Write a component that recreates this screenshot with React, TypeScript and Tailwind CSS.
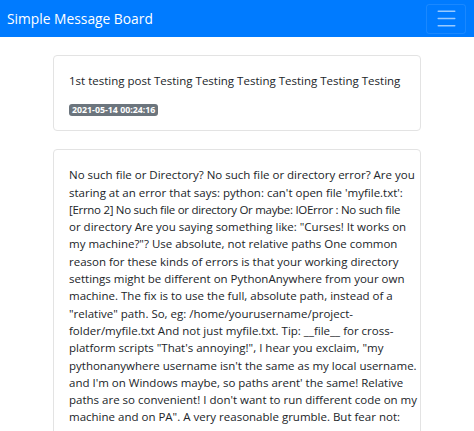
import { Menu } from 'lucide-react';

const firstPost = '1st testing post Testing Testing Testing Testing Testing Testing';

// line breaks follow the original wrapping
const secondPost = [
  'No such file or Directory? No such file or directory error? Are you',
  "staring at an error that says: python: can't open file 'myfile.txt':",
  '[Errno 2] No such file or directory Or maybe: IOError : No such file',
  'or directory Are you saying something like: "Curses! It works on',
  'my machine?"? Use absolute, not relative paths One common',
  'reason for these kinds of errors is that your working directory',
  'settings might be different on PythonAnywhere from your own',
  'machine. The fix is to use the full, absolute path, instead of a',
  '"relative" path. So, eg: /home/yourusername/project-',
  'folder/myfile.txt And not just myfile.txt. Tip: __file__ for cross-',
  'platform scripts "That\'s annoying!", I hear you exclaim, "my',
  "pythonanywhere username isn't the same as my local username.",
  "and I'm on Windows maybe, so paths arent' the same! Relative",
  "paths are so convenient! I don't want to run different code on my",
  'machine and on PA". A very reasonable grumble. But fear not:',
  'import os THIS_FOLDER = os.path.dirname(os.path.abspath(__file__))',
];

const App = () => {
  return (
    <div className="min-h-screen bg-white text-[#212529]" style={{ fontFamily: '"Open Sans", "Noto Sans", sans-serif' }}>
      {/* Navbar */}
      <nav className="h-[37px] bg-[#007bff] flex items-center justify-between pl-[7px] pr-[8px]">
        <span className="text-white text-[13.8px] leading-none">Simple Message Board</span>
        <button className="w-[40px] h-[30px] border border-white/10 rounded-[3px] flex items-center justify-center text-white/60">
          <Menu className="w-[25px] h-[25px]" strokeWidth={1.3} />
        </button>
      </nav>

      {/* Posts */}
      <main className="w-[368px] mx-auto pt-[18px] flex flex-col gap-[18px]">
        <div className="border border-[#e3e3e3] rounded-[4px] px-[15px] pt-[16px] pb-[14px]">
          <p className="text-[11.5px] leading-[17.3px] whitespace-nowrap">{firstPost}</p>
          <div className="flex mt-[15px]">
            <span className="bg-[#6c757d] text-white text-[8.8px] font-bold leading-[12px] px-[3px] rounded-[3px]">
              2021-05-14 00:24:16
            </span>
          </div>
        </div>

        <div className="border border-[#e3e3e3] rounded-[4px] px-[15px] pt-[16px] pb-[15px]">
          <p className="text-[11.5px] leading-[17.3px]">
            {secondPost.map((line, i) => (
              <span key={i} className={i === 2 ? 'block whitespace-nowrap tracking-[-0.3px]' : 'block whitespace-nowrap'}>
                {line}
              </span>
            ))}
          </p>
        </div>
      </main>
    </div>
  );
};

export default App;
